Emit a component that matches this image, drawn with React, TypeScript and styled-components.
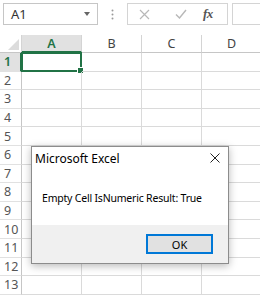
import React from "react";
import styled, { createGlobalStyle } from "styled-components";

const Global = createGlobalStyle`
  body {
    margin: 0;
    background: #fff;
    overflow: hidden;
    font-family: "Noto Sans", "Open Sans", sans-serif;
  }
`;

const Page = styled.div`
  position: relative;
  width: 260px;
  height: 300px;
  overflow: hidden;
`;

const TopBar = styled.div`
  height: 35px;
  display: flex;
  align-items: flex-start;
  padding-top: 3px;
  box-sizing: border-box;
  padding-left: 3px;
`;

const NameBox = styled.div`
  width: 95px;
  height: 22px;
  box-sizing: border-box;
  border: 1px solid #c6c6c6;
  display: flex;
  align-items: center;
  justify-content: space-between;
  padding: 0 7px 0 7px;
  font-size: 13px;
  color: #333;
`;

const Arrow = styled.span`
  width: 0;
  height: 0;
  border-left: 3.5px solid transparent;
  border-right: 3.5px solid transparent;
  border-top: 4px solid #666;
`;

const Grip = styled.div`
  width: 29px;
  height: 22px;
  display: flex;
  align-items: center;
  justify-content: center;
`;

const FormulaTools = styled.div`
  width: 101px;
  height: 22px;
  box-sizing: border-box;
  border: 1px solid #d4d4d4;
  display: flex;
  align-items: center;
  padding-left: 11px;
`;

const ToolIcon = styled.span<{ $w: number }>`
  width: ${(p) => p.$w}px;
  display: flex;
  align-items: center;
`;

const Fx = styled.span`
  font-family: "Liberation Serif", serif;
  font-style: italic;
  font-size: 13px;
  color: #555;
  font-weight: bold;
  letter-spacing: -0.5px;
`;

const FormulaInput = styled.div`
  margin-left: 4px;
  flex: 1;
  height: 22px;
  box-sizing: border-box;
  border: 1px solid #d4d4d4;
  border-right: none;
`;

const Sheet = styled.div`
  display: grid;
  grid-template-columns: 22px repeat(4, 60px);
  grid-template-rows: 18px repeat(13, 18.6px);
`;

const Corner = styled.div`
  position: relative;
  border-right: 1px solid #d4d4d4;
  border-bottom: 1px solid #c6c6c6;
  box-sizing: border-box;
  &::after {
    content: "";
    position: absolute;
    right: 2px;
    bottom: 2px;
    width: 0;
    height: 0;
    border-left: 11px solid transparent;
    border-bottom: 11px solid #dcdcdc;
  }
`;

const ColHead = styled.div<{ $sel?: boolean }>`
  box-sizing: border-box;
  display: flex;
  align-items: center;
  justify-content: center;
  font-size: 12.5px;
  color: ${(p) => (p.$sel ? "#217346" : "#444")};
  font-weight: ${(p) => (p.$sel ? 600 : 400)};
  background: ${(p) => (p.$sel ? "#e1e1e1" : "#fff")};
  border-right: 1px solid #d4d4d4;
  border-bottom: ${(p) => (p.$sel ? "2px solid #217346" : "1px solid #c6c6c6")};
`;

const RowHead = styled.div<{ $sel?: boolean }>`
  box-sizing: border-box;
  display: flex;
  align-items: center;
  padding-left: 4px;
  font-size: 12.5px;
  color: ${(p) => (p.$sel ? "#217346" : "#555")};
  font-weight: ${(p) => (p.$sel ? 600 : 400)};
  background: ${(p) => (p.$sel ? "#e1e1e1" : "#fff")};
  border-right: ${(p) => (p.$sel ? "2px solid #217346" : "1px solid #c6c6c6")};
  border-bottom: 1px solid #e1e1e1;
`;

const Cell = styled.div<{ $sel?: boolean }>`
  position: relative;
  box-sizing: border-box;
  border-right: 1px solid #dadada;
  border-bottom: 1px solid #dadada;
  ${(p) =>
    p.$sel &&
    `
    border: 2px solid #217346;
    margin: -1px 0 0 -1px;
    &::after {
      content: "";
      position: absolute;
      right: -4px;
      bottom: -4px;
      width: 5px;
      height: 5px;
      background: #217346;
      border: 1px solid #fff;
    }
  `}
`;

const Dialog = styled.div`
  position: absolute;
  left: 31px;
  top: 146px;
  width: 198px;
  height: 118px;
  box-sizing: border-box;
  background: #fff;
  border: 1px solid #8c8c8c;
  box-shadow: 0 2px 8px rgba(0, 0, 0, 0.28);
  display: flex;
  flex-direction: column;
  font-family: "Noto Sans", "Open Sans", sans-serif;
`;

const TitleRow = styled.div`
  height: 22px;
  display: flex;
  align-items: center;
  justify-content: space-between;
  padding: 0 8px 0 3px;
`;

const Title = styled.span`
  font-size: 12px;
  color: #000;
`;

const Message = styled.div`
  height: 56px;
  box-sizing: border-box;
  padding: 21px 0 0 10px;
  font-size: 10.5px;
  letter-spacing: -0.2px;
  line-height: 17px;
  color: #000;
  white-space: nowrap;
`;

const Footer = styled.div`
  flex: 1;
  background: #f0f0f0;
  display: flex;
  justify-content: flex-end;
  align-items: flex-start;
  padding: 9px 15px 0 0;
`;

const OkButton = styled.button`
  width: 67px;
  height: 20px;
  box-sizing: border-box;
  border: 2px solid #0078d7;
  background: #e1e1e1;
  font-family: "Noto Sans", "Open Sans", sans-serif;
  font-size: 11px;
  color: #000;
  padding: 0;
  box-shadow: inset 0 0 0 1px #e1e1e1;
`;

const cols = ["A", "B", "C", "D"];
const rows = Array.from({ length: 13 }, (_, i) => i + 1);

export default function App() {
  return (
    <Page>
      <Global />
      <TopBar>
        <NameBox>
          A1
          <Arrow />
        </NameBox>
        <Grip>
          <svg width="3" height="11" viewBox="0 0 3 11">
            <circle cx="1.5" cy="1.5" r="1" fill="#9a9a9a" />
            <circle cx="1.5" cy="5.5" r="1" fill="#9a9a9a" />
            <circle cx="1.5" cy="9.5" r="1" fill="#9a9a9a" />
          </svg>
        </Grip>
        <FormulaTools>
          <ToolIcon $w={36}>
            <svg width="11" height="11" viewBox="0 0 11 11">
              <path d="M1 1L10 10M10 1L1 10" stroke="#b8b8b8" strokeWidth="1.2" />
            </svg>
          </ToolIcon>
          <ToolIcon $w={28}>
            <svg width="12" height="10" viewBox="0 0 12 10">
              <path d="M1 5.5L4.5 9L11 1" stroke="#b8b8b8" strokeWidth="1.4" fill="none" />
            </svg>
          </ToolIcon>
          <ToolIcon $w={20}>
            <Fx>fx</Fx>
          </ToolIcon>
        </FormulaTools>
        <FormulaInput />
      </TopBar>
      <Sheet>
        <Corner />
        {cols.map((c) => (
          <ColHead key={c} $sel={c === "A"}>
            {c}
          </ColHead>
        ))}
        {rows.map((r) => (
          <React.Fragment key={r}>
            <RowHead $sel={r === 1}>{r}</RowHead>
            {cols.map((c) => (
              <Cell key={c} $sel={r === 1 && c === "A"} />
            ))}
          </React.Fragment>
        ))}
      </Sheet>
      <Dialog>
        <TitleRow>
          <Title>Microsoft Excel</Title>
          <svg width="10" height="10" viewBox="0 0 10 10">
            <path d="M0.5 0.5L9.5 9.5M9.5 0.5L0.5 9.5" stroke="#222" strokeWidth="1" />
          </svg>
        </TitleRow>
        <Message>Empty Cell IsNumeric Result: True</Message>
        <Footer>
          <OkButton>OK</OkButton>
        </Footer>
      </Dialog>
    </Page>
  );
}
